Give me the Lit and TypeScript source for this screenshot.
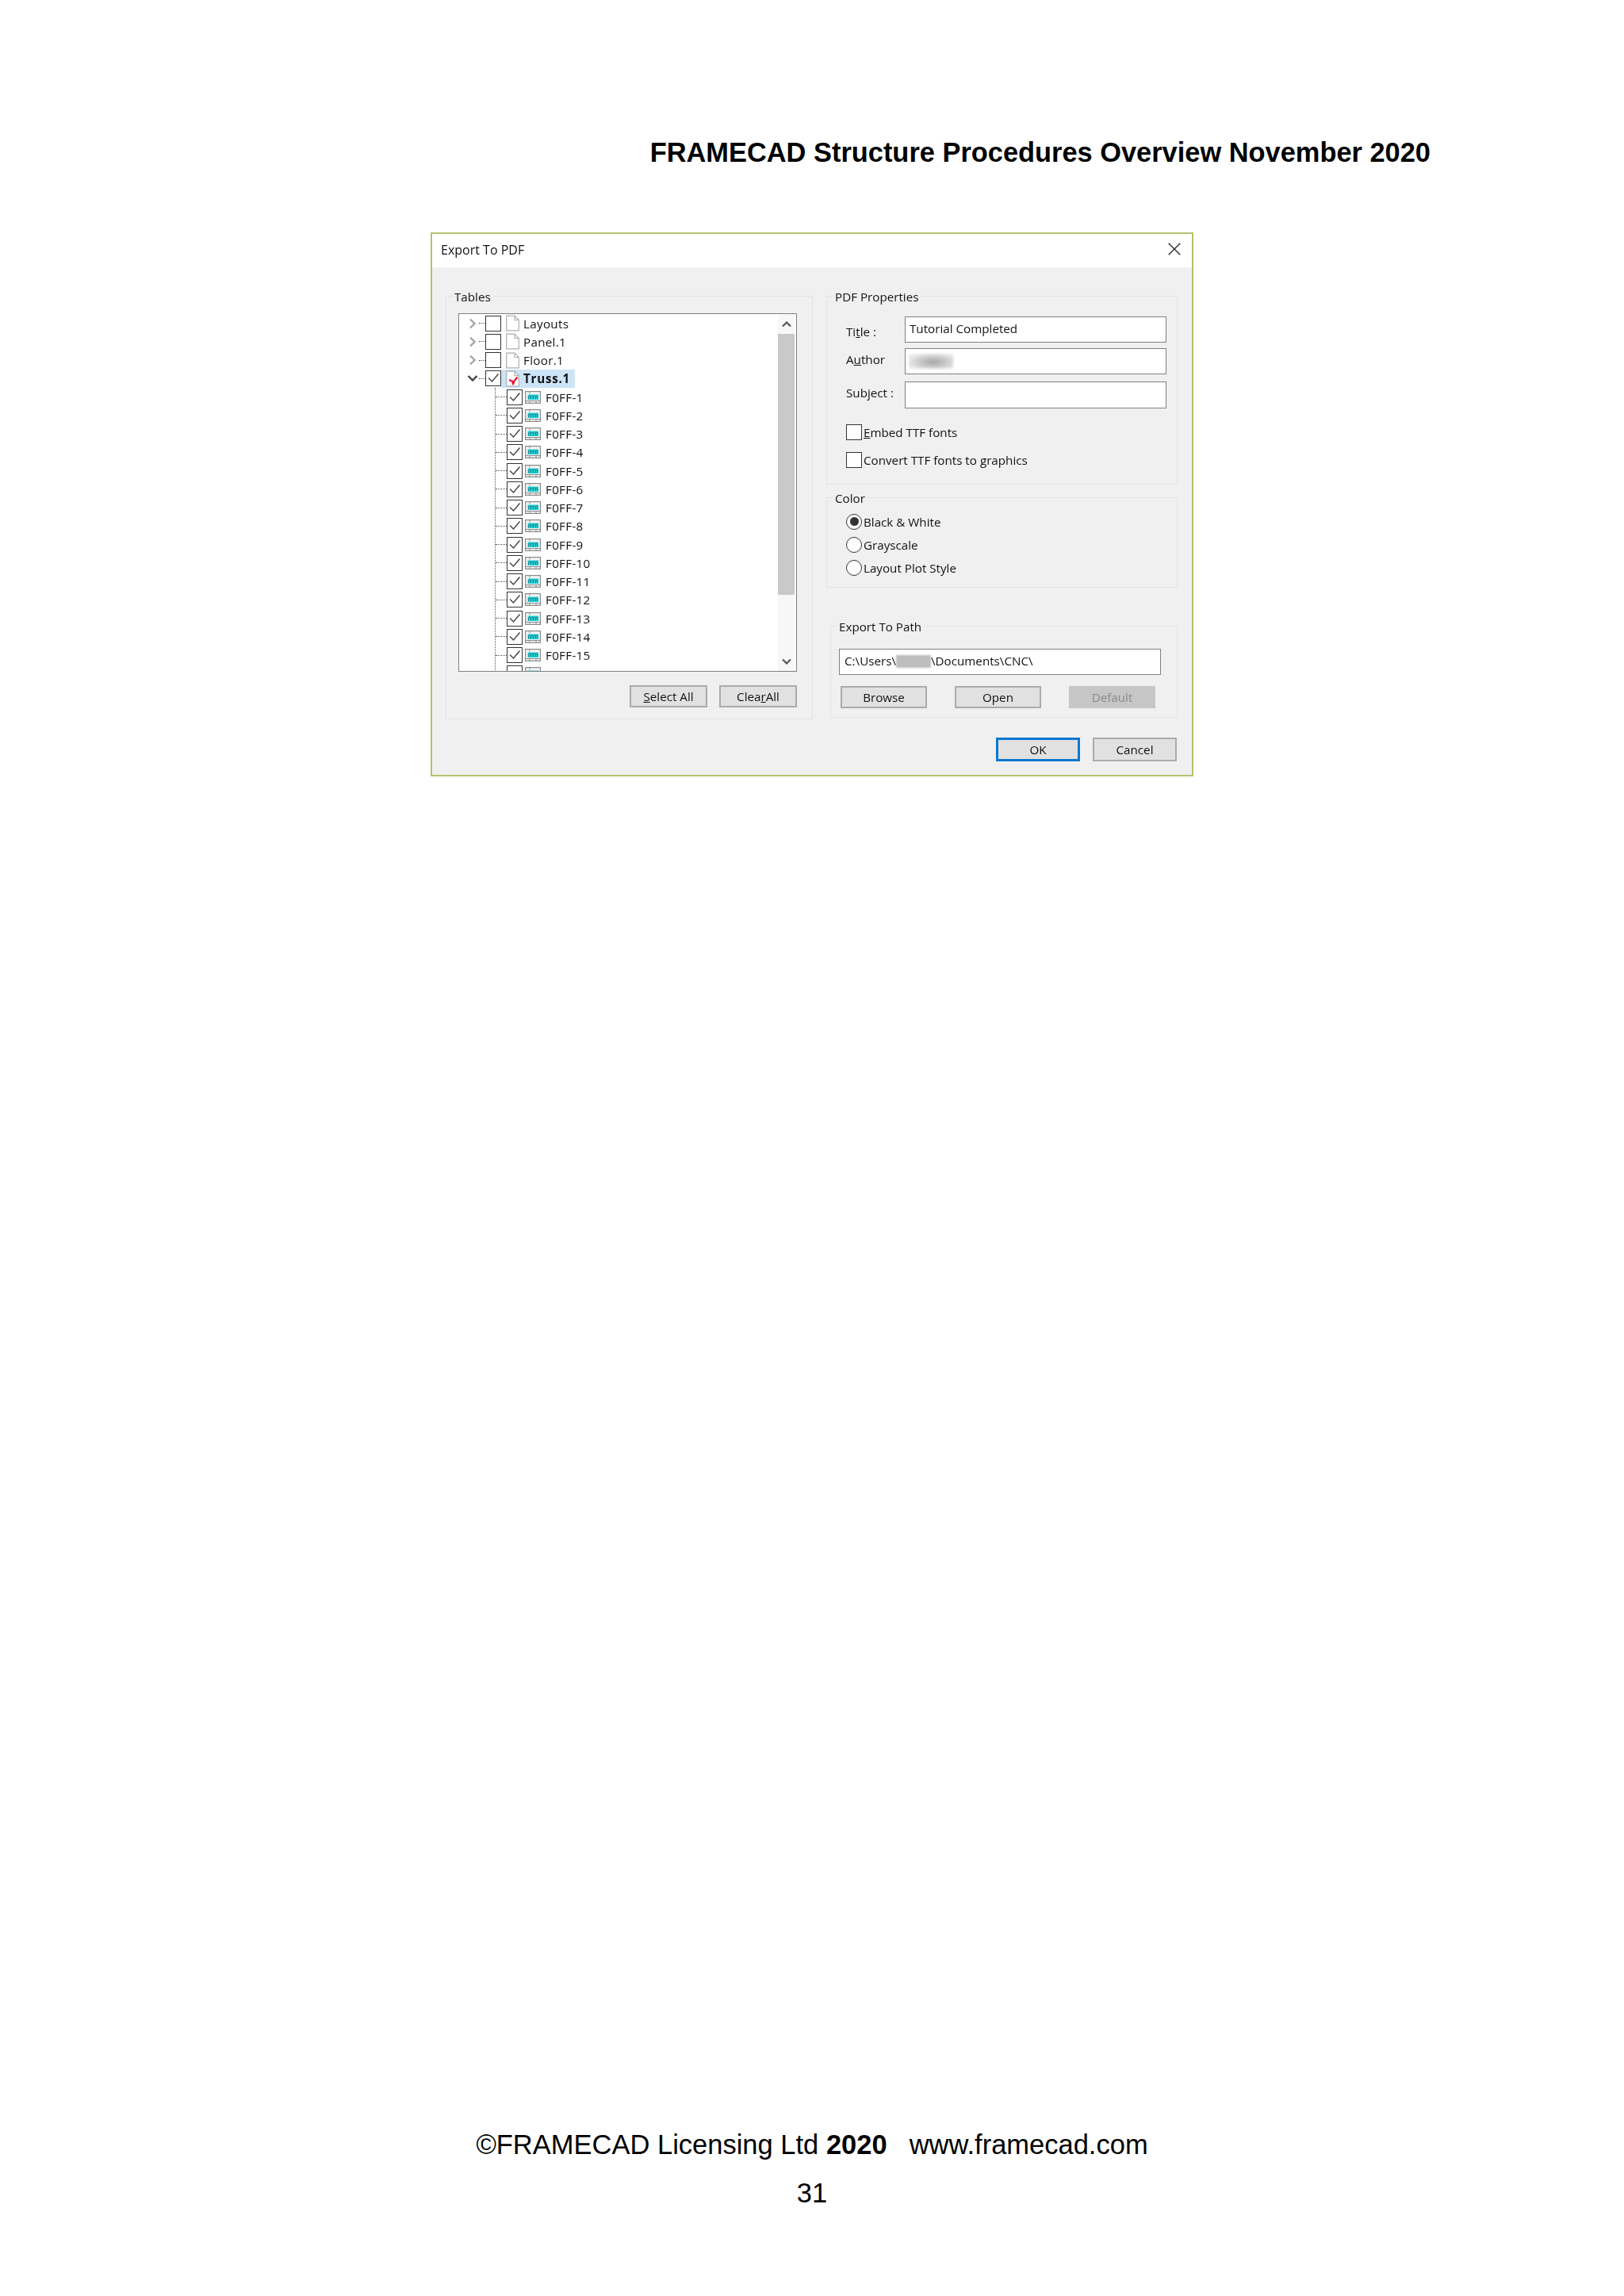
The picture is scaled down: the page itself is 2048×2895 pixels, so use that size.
import { LitElement, html, css, svg } from "lit";
import { customElement } from "lit/decorators.js";

const chevronR = html`<svg class="chev" viewBox="0 0 12 14" width="12" height="14"><path d="M3 1.5 L8.5 7 L3 12.5" fill="none" stroke="#a6a6a6" stroke-width="2.4"/></svg>`;
const chevronD = html`<svg class="chev" viewBox="0 0 14 12" width="14" height="12"><path d="M1.5 3 L7 8.5 L12.5 3" fill="none" stroke="#444" stroke-width="2.4"/></svg>`;
const checkMark = svg`<path d="M3 8.5 L7.5 13 L15.5 3.5" fill="none" stroke="#444" stroke-width="1.4"/>`;

function box(checked: boolean) {
  return html`<span class="box"><svg viewBox="0 0 18 18" width="18" height="18">${checked ? checkMark : ""}</svg></span>`;
}
function pageIcon(truss = false) {
  return html`<svg class="page" viewBox="0 0 17 20" width="17" height="20">
    <path d="M.7.7 H11 L16.3 6 V19.3 H.7 Z" fill="#fff" stroke="#aeaeae" stroke-width="1.2"/>
    <path d="M11 .7 V6 H16.3" fill="none" stroke="#aeaeae" stroke-width="1.2"/>
    ${truss ? svg`<path d="M4 11.5 L8.5 13.5 L9 17.5 L10.5 13 L14.5 8" fill="none" stroke="#e8112d" stroke-width="2.2"/>` : ""}
  </svg>`;
}
const frameIcon = html`<svg class="frame" viewBox="0 0 20 16" width="20" height="16">
  <rect x=".6" y=".6" width="18.8" height="14.8" fill="#f4f4f4" stroke="#8a8a8a" stroke-width="1.2"/>
  <path d="M.6 12.5 H19.4 M6 .6 V3.5 M6 12.5 V15.4 M14 12.5 V15.4" stroke="#8a8a8a" stroke-width="1" fill="none"/>
  <rect x="3.5" y="4.5" width="13.5" height="6.5" fill="#19d3d3"/>
  <path d="M4.5 10 V7 Q6 4.8 7.5 7 V10 M7.5 7 Q9 4.8 10.5 7 V10 M10.5 7 Q12 4.8 13.5 7 V10 M13.5 7 Q15 4.8 16 7 V10" fill="none" stroke="#336a7a" stroke-width=".8"/>
</svg>`;

@customElement("app-root")
export class AppRoot extends LitElement {
  static styles = css`
    :host { display: block; width: 2048px; background: #fff; }
    .page { height: 2895px; box-sizing: border-box; display: flex; flex-direction: column; font-family: "Liberation Sans", Arial, sans-serif; color: #000; }
    .head { margin: 0; padding: 171px 244px 0 0; text-align: right; font-size: 34.4px; line-height: 42px; font-weight: 700; white-space: nowrap; }
    .foot { margin-top: auto; padding-bottom: 99px; text-align: center; font-size: 34.5px; line-height: 60px; }
    .foot .gap { display: inline-block; width: 28px; }
    .foot div { height: 61px; }

    .dialog { margin: 80px 0 0 543px; width: 962px; height: 686px; box-sizing: border-box; border: 2px solid #b3c26c; background: #f0f0f0; display: flex; flex-direction: column; font-family: "Open Sans", "Noto Sans", sans-serif; font-size: 15.2px; color: #111; filter: blur(0.4px); }
    .titlebar { height: 42px; flex: none; background: #fff; display: flex; align-items: center; justify-content: space-between; padding: 0 14px 2px 11px; box-sizing: border-box; font-size: 16px; }
    .close { display: block; margin-bottom: 3px; }
    .body { display: flex; gap: 17px; padding: 36px 0 0 17px; }
    .col { width: 443px; display: flex; flex-direction: column; }
    .group { position: relative; box-sizing: border-box; border: 1.5px solid #e2e2e2; }
    .legend { position: absolute; top: -10px; left: 7px; line-height: 20px; padding: 0 3px; background: #f0f0f0; white-space: nowrap; }

    .tables { width: 463px; height: 534px; padding: 21px 19px 0 15px; display: flex; flex-direction: column; }
    .tree { width: 427px; height: 452px; box-sizing: border-box; flex: none; background: #fff; border: 1.5px solid #808080; display: flex; overflow: hidden; letter-spacing: .3px; }
    .list { flex: 1; min-width: 0; overflow: hidden; }
    .row { height: 23.25px; display: flex; align-items: center; white-space: nowrap; }
    .top { padding-left: 8px; }
    .chevslot { width: 17px; display: flex; justify-content: center; flex: none; }
    .tick { width: 8px; height: 0; border-top: 1px dotted #555; flex: none; }
    .box { width: 18px; height: 18px; box-sizing: content-box; display: inline-block; border: 1.6px solid #333; flex: none; background: #fff; margin-top: -1px; margin-bottom: -1px; }
    .box svg { display: block; }
    .sel { display: flex; align-items: center; height: 23px; margin-left: 0; padding: 0 6px 0 6px; background: #cce4f7; font-weight: 700; color: #111; letter-spacing: .75px; }
    .nosel { display: flex; align-items: center; padding-left: 6px; }
    svg.page { margin-right: 5px; flex: none; display: block; }
    .kids { margin-left: 45px; border-left: 1px dotted #555; }
    .kid .elbow { width: 14px; height: 0; border-top: 1px dotted #555; flex: none; }
    svg.frame { margin: 0 6px 0 3px; flex: none; display: block; }
    .scroll { width: 21px; margin: 0 2px 0 0; flex: none; background: #f7f7f7; display: flex; flex-direction: column; }
    .arrow { flex: none; height: 25px; display: flex; align-items: center; justify-content: center; }
    .thumb { flex: none; height: 329px; background: #c9c9c9; }
    .scroll .fill { flex: 1; }
    .tbtns { display: flex; justify-content: flex-end; gap: 15px; margin-top: 17px; }

    .btn { box-sizing: border-box; height: 28px; background: #e1e1e1; border: 2px solid #ababab; display: flex; align-items: center; justify-content: center; white-space: nowrap; }
    .w98 { width: 98px; }
    .w109 { width: 109px; }
    .w106 { width: 106px; height: 30px; }
    .disabled { background: #c6c6c6; border-color: #c6c6c6; color: #8a8a8a; }
    .ok { border: 3px solid #0a78d2; }

    .pdf { height: 238px; padding: 25px 13px 0 24px; }
    .form { display: grid; grid-template-columns: 74px 330px; }
    .form label { display: block; }
    .input { box-sizing: border-box; height: 33px; background: #fff; border: 1.5px solid #808080; display: flex; align-items: center; padding: 0 5px 3px; white-space: nowrap; }
    .t { margin-top: 9px; }
    .a { margin-top: 11px; }
    .s { margin-top: 13px; }
    .i2 { margin-top: 7px; }
    .i3 { margin-top: 9px; height: 34px; }
    .blurname { width: 56px; height: 19px; margin: 3px 0 0 -1px; background: radial-gradient(ellipse at 55% 55%, #a4a4a4, #ececec 78%); filter: blur(1.5px); }
    .checks { display: flex; flex-direction: column; gap: 16px; margin-top: 20px; }
    .check { display: flex; align-items: center; gap: 2px; height: 19px; white-space: nowrap; }
    .color { height: 114px; margin-top: 16px; padding: 20px 0 0 24px; display: flex; flex-direction: column; gap: 10px; }
    .radio { display: flex; align-items: center; gap: 2px; height: 19px; white-space: nowrap; }
    .dot { width: 18px; height: 18px; box-sizing: content-box; border: 1.6px solid #333; border-radius: 50%; background: #fff; display: flex; align-items: center; justify-content: center; flex: none; }
    .dot i { display: block; width: 11px; height: 11px; border-radius: 50%; background: #333; }
    .export { height: 116px; width: 438px; align-self: flex-end; margin-top: 48px; padding: 28px 0 0 10px; }
    .path { width: 406px; padding-left: 6px; }
    .mask { display: inline-block; width: 44px; height: 16px; background: #bdbdbd; filter: blur(1.2px); vertical-align: -3px; }
    .pbtns { display: flex; gap: 35px; margin: 14px 0 0 2px; }
    .footbtns { display: flex; justify-content: flex-end; gap: 16px; padding: 23px 19px 0 0; }
  `;

  render() {
    const tops = ["Layouts", "Panel.1", "Floor.1"];
    const kids = Array.from({ length: 15 }, (_, i) => `F0FF-${i + 1}`);
    return html`<div class="page">
      <h1 class="head">FRAMECAD Structure Procedures Overview November 2020</h1>
      <div class="dialog">
        <div class="titlebar">
          <span>Export To PDF</span>
          <svg class="close" viewBox="0 0 16 16" width="16" height="16"><path d="M.7.7 L15.3 15.3 M15.3.7 L.7 15.3" stroke="#222" stroke-width="1.3"/></svg>
        </div>
        <div class="body">
          <section class="group tables">
            <div class="legend">Tables</div>
            <div class="tree">
              <div class="list">
                ${tops.map(t => html`<div class="row top"><span class="chevslot">${chevronR}</span><span class="tick"></span>${box(false)}<span class="nosel">${pageIcon()}${t}</span></div>`)}
                <div class="row top"><span class="chevslot">${chevronD}</span><span class="tick"></span>${box(true)}<span class="sel">${pageIcon(true)}Truss.1</span></div>
                <div class="kids">
                  ${kids.map(k => html`<div class="row kid"><span class="elbow"></span>${box(true)}${frameIcon}${k}</div>`)}
                  <div class="row kid"><span class="elbow"></span>${box(false)}${frameIcon}</div>
                </div>
              </div>
              <div class="scroll">
                <div class="arrow"><svg viewBox="0 0 12 8" width="12" height="8"><path d="M1 6.5 L6 1.5 L11 6.5" fill="none" stroke="#555" stroke-width="2.2"/></svg></div>
                <div class="thumb"></div>
                <div class="fill"></div>
                <div class="arrow"><svg viewBox="0 0 12 8" width="12" height="8"><path d="M1 1.5 L6 6.5 L11 1.5" fill="none" stroke="#555" stroke-width="2.2"/></svg></div>
              </div>
            </div>
            <div class="tbtns">
              <div class="btn w98"><span><u>S</u>elect All</span></div>
              <div class="btn w98"><span>Clea<u>r</u>All</span></div>
            </div>
          </section>
          <div class="col">
            <section class="group pdf">
              <div class="legend">PDF Properties</div>
              <div class="form">
                <label class="t">Ti<u>t</u>le :</label><div class="input">Tutorial Completed</div>
                <label class="a">A<u>u</u>thor</label><div class="input i2"><div class="blurname"></div></div>
                <label class="s">Sub<u>j</u>ect :</label><div class="input i3"></div>
              </div>
              <div class="checks">
                <div class="check">${box(false)}<span><u>E</u>mbed TTF fonts</span></div>
                <div class="check">${box(false)}<span>Convert TTF fonts to <u>g</u>raphics</span></div>
              </div>
            </section>
            <section class="group color">
              <div class="legend">Color</div>
              <div class="radio"><span class="dot"><i></i></span>Black &amp; White</div>
              <div class="radio"><span class="dot"></span>Grayscale</div>
              <div class="radio"><span class="dot"></span>Layout Plot Style</div>
            </section>
            <section class="group export">
              <div class="legend">Export To Path</div>
              <div class="input path"><span>${"C:\\Users\\"}<span class="mask"></span>${"\\Documents\\CNC\\"}</span></div>
              <div class="pbtns">
                <div class="btn w109">Browse</div>
                <div class="btn w109">Open</div>
                <div class="btn w109 disabled">Default</div>
              </div>
            </section>
          </div>
        </div>
        <div class="footbtns">
          <div class="btn w106 ok">OK</div>
          <div class="btn w106">Cancel</div>
        </div>
      </div>
      <footer class="foot">
        <div>©FRAMECAD Licensing Ltd <b>2020</b><span class="gap"></span>www.framecad.com</div>
        <div>31</div>
      </footer>
    </div>`;
  }
}
